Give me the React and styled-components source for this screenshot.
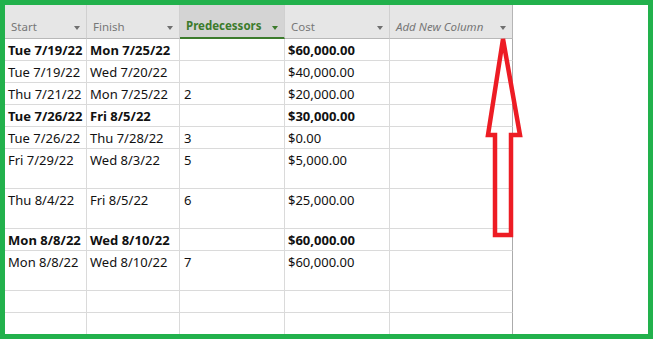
import React from "react";
import styled, { createGlobalStyle } from "styled-components";

const columns = [
  { key: "start", label: "Start", width: 82 },
  { key: "finish", label: "Finish", width: 93 },
  { key: "pred", label: "Predecessors", width: 105, active: true },
  { key: "cost", label: "Cost", width: 105 },
  { key: "add", label: "Add New Column", width: 123, italic: true },
];

const rows = [
  { bold: true, start: "Tue 7/19/22", finish: "Mon 7/25/22", pred: "", cost: "$60,000.00" },
  { start: "Tue 7/19/22", finish: "Wed 7/20/22", pred: "", cost: "$40,000.00" },
  { start: "Thu 7/21/22", finish: "Mon 7/25/22", pred: "2", cost: "$20,000.00" },
  { bold: true, start: "Tue 7/26/22", finish: "Fri 8/5/22", pred: "", cost: "$30,000.00" },
  { start: "Tue 7/26/22", finish: "Thu 7/28/22", pred: "3", cost: "$0.00" },
  { tall: true, start: "Fri 7/29/22", finish: "Wed 8/3/22", pred: "5", cost: "$5,000.00" },
  { tall: true, start: "Thu 8/4/22", finish: "Fri 8/5/22", pred: "6", cost: "$25,000.00" },
  { bold: true, start: "Mon 8/8/22", finish: "Wed 8/10/22", pred: "", cost: "$60,000.00" },
  { tall: true, start: "Mon 8/8/22", finish: "Wed 8/10/22", pred: "7", cost: "$60,000.00" },
  {},
  {},
];

const Global = createGlobalStyle`
  html, body {
    margin: 0;
    padding: 0;
    background: #fff;
  }
  body {
    font-family: "Noto Sans", "Open Sans", sans-serif;
  }
`;

const Frame = styled.div`
  position: relative;
  width: 653px;
  height: 339px;
  box-sizing: border-box;
  border: 5px solid #22b14c;
  background: #fff;
  overflow: hidden;
`;

const Grid = styled.div`
  display: grid;
  grid-template-columns: ${columns.map((c) => c.width + "px").join(" ")};
  grid-auto-rows: auto;
  width: 508px;
`;

const HeadCell = styled.div`
  box-sizing: border-box;
  height: 34px;
  display: flex;
  align-items: flex-end;
  justify-content: space-between;
  padding: 0 6px 3px 6px;
  background: ${(p) => (p.$active ? "#d4d4d4" : "#e6e6e6")};
  border-right: 1px solid ${(p) => (p.$last ? "#b5b5b5" : "#d0d0d0")};
  border-bottom: ${(p) => (p.$active ? "2px solid #3c7b2c" : "1px solid #b8b8b8")};
  font-size: 11.5px;
  line-height: 16px;
  color: ${(p) => (p.$active ? "#3c7b2c" : "#777")};
  font-weight: ${(p) => (p.$active ? 700 : 400)};
  font-style: ${(p) => (p.$italic ? "italic" : "normal")};
  white-space: nowrap;
`;

const Caret = styled.span`
  width: 0;
  height: 0;
  margin-bottom: ${(p) => (p.$active ? 4 : 5)}px;
  border-left: 3.5px solid transparent;
  border-right: 3.5px solid transparent;
  border-top: 4px solid ${(p) => (p.$active ? "#3c7b2c" : "#6f6f6f")};
`;

const Cell = styled.div`
  box-sizing: border-box;
  height: ${(p) => (p.$tall ? 40 : 22)}px;
  padding: 3px 2px 0 ${(p) => (p.$pad ? 4 : 3)}px;
  border-right: 1px solid ${(p) => (p.$last ? "#ababab" : "#dadada")};
  border-bottom: 1px solid #dadada;
  font-size: 13px;
  line-height: 16px;
  color: #111;
  font-weight: ${(p) => (p.$bold ? 700 : 400)};
  white-space: nowrap;
  overflow: hidden;
`;

const Arrow = styled.svg`
  position: absolute;
  left: 475px;
  top: 30px;
  width: 50px;
  height: 210px;
  pointer-events: none;
`;

export default function App() {
  return (
    <Frame>
      <Global />
      <Grid>
        {columns.map((c, i) => (
          <HeadCell
            key={c.key}
            $active={c.active}
            $italic={c.italic}
            $last={i === columns.length - 1}
          >
            <span>{c.label}</span>
            <Caret $active={c.active} />
          </HeadCell>
        ))}
        {rows.map((r, ri) =>
          columns.map((c, i) => (
            <Cell
              key={ri + c.key}
              $tall={r.tall}
              $bold={r.bold}
              $pad={c.key === "pred"}
              $last={i === columns.length - 1}
            >
              {r[c.key] || ""}
            </Cell>
          ))
        )}
      </Grid>
      <Arrow viewBox="0 0 50 210">
        <polygon
          points="23,4 40,100 31,100 31,200 15,200 15,100 8,100"
          fill="none"
          stroke="#ed1c24"
          strokeWidth="4.5"
          strokeLinejoin="miter"
        />
      </Arrow>
    </Frame>
  );
}
